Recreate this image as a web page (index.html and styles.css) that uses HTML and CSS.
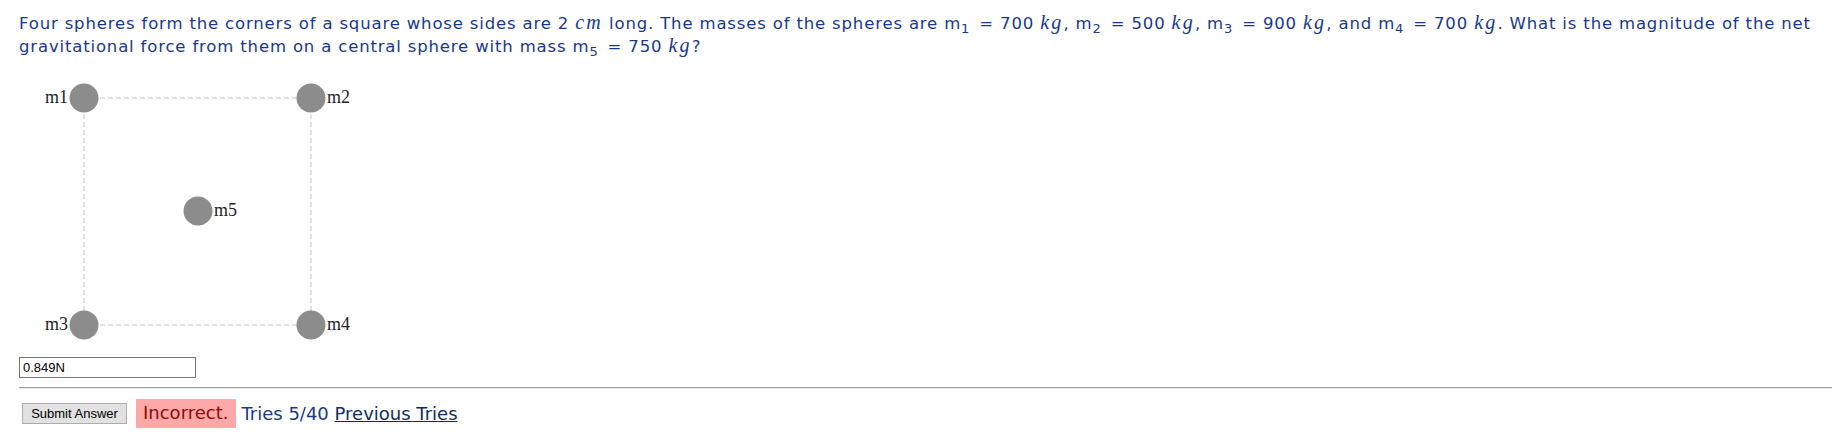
FILE: index.html
```html
<!DOCTYPE html>
<html>
<head>
<meta charset="utf-8">
<link rel="stylesheet" href="styles.css">
</head>
<body>
<div class="page">
  <p class="question">Four spheres form the corners of a square whose sides are 2 <i class="math">cm</i> long. The masses of the spheres are m<sub>1</sub> = 700 <i class="math">kg</i>, m<sub>2</sub> = 500 <i class="math">kg</i>, m<sub>3</sub> = 900 <i class="math">kg</i>, and m<sub>4</sub> = 700 <i class="math">kg</i>. What is the magnitude of the net gravitational force from them on a central sphere with mass m<sub>5</sub> = 750 <i class="math">kg</i>?</p>
  <svg class="diagram" width="340" height="290" viewBox="0 0 340 290">
    <g class="edges">
      <line x1="64" y1="38" x2="291" y2="38"/>
      <line x1="64" y1="265" x2="291" y2="265"/>
      <line x1="64" y1="38" x2="64" y2="265"/>
      <line x1="291" y1="38" x2="291" y2="265"/>
    </g>
    <g class="spheres">
      <circle cx="64" cy="38" r="14.5"/>
      <circle cx="291" cy="38" r="14.5"/>
      <circle cx="178" cy="151" r="14.5"/>
      <circle cx="64" cy="265" r="14.5"/>
      <circle cx="291" cy="265" r="14.5"/>
    </g>
    <g class="labels">
      <text x="48" y="43" text-anchor="end">m1</text>
      <text x="307" y="43">m2</text>
      <text x="194" y="156">m5</text>
      <text x="48" y="270" text-anchor="end">m3</text>
      <text x="307" y="270">m4</text>
    </g>
  </svg>
  <input class="answer" type="text" value="0.849N">
  <hr class="divider">
  <div class="submit-row">
    <button class="submit">Submit Answer</button>
    <span class="incorrect">Incorrect.</span>
    <span class="tries">Tries 5/40 <a class="prev" href="#">Previous Tries</a></span>
  </div>
</div>
</body>
</html>
```
FILE: styles.css
```css
html, body {
  margin: 0;
  padding: 0;
  background: #ffffff;
}
.page {
  padding: 12px 0 0 19px;
  font-family: Verdana, "DejaVu Sans", sans-serif;
  color: #17388e;
}
.question {
  margin: 0 8px 0 0;
  font-size: 16.5px;
  letter-spacing: 0.84px;
  line-height: 23px;
}
.question sub {
  font-size: 13px;
  line-height: 0;
  vertical-align: -4px;
  margin-right: 3px;
}
.math {
  font-family: "Liberation Serif", "Times New Roman", serif;
  font-size: 20px;
  font-style: italic;
  letter-spacing: 2.2px;
  line-height: 0;
}
.diagram {
  display: block;
  margin-top: 2px;
  margin-left: 1px;
}
.edges line {
  stroke: #c4c4c4;
  stroke-width: 1;
  stroke-dasharray: 5 3;
}
.spheres circle {
  fill: #8c8c8c;
}
.labels text {
  font-family: "Liberation Serif", "Times New Roman", serif;
  font-size: 18px;
  fill: #222222;
}
.answer {
  display: block;
  box-sizing: border-box;
  width: 177px;
  height: 21px;
  margin: 7px 0 0 0;
  padding: 1px 3px;
  border: 1px solid #767676;
  font-family: "Liberation Sans", Arial, sans-serif;
  font-size: 13px;
  color: #000;
  background: #fff;
}
.divider {
  margin: 9px 0 0 0;
  border: 0;
  border-top: 1px solid #9a9a9a;
  border-bottom: 1px solid #ececec;
  height: 0;
}
.submit-row {
  display: flex;
  align-items: center;
  margin-top: 10px;
  font-size: 18px;
}
.submit {
  box-sizing: border-box;
  width: 105px;
  height: 21px;
  margin-left: 3px;
  padding: 0 4px;
  border: 1px solid #adadad;
  border-radius: 0;
  background: #e1e1e1;
  font-family: "Liberation Sans", Arial, sans-serif;
  font-size: 13px;
  color: #000;
}
.incorrect {
  margin-left: 9px;
  padding: 3px 8px 4px 7px;
  background: #ffa8a8;
  color: #8b0a0a;
  line-height: 22px;
}
.tries {
  margin-left: 5px;
  color: #17388e;
}
.prev {
  color: #0f2d63;
  text-decoration: underline;
}
```
